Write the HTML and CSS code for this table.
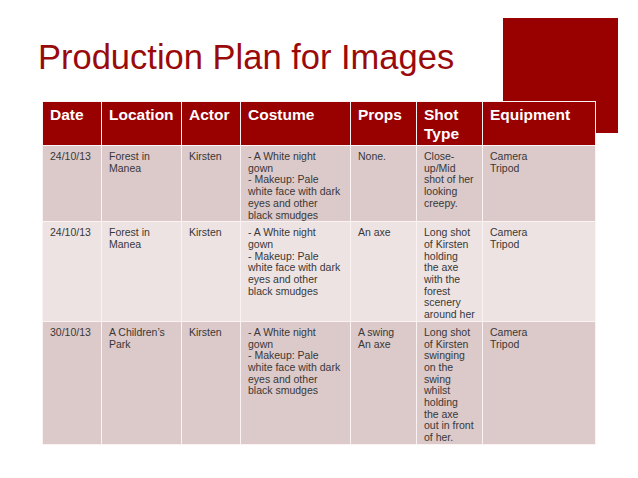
FILE: index.html
```html
<!DOCTYPE html>
<html>
<head>
<meta charset="utf-8">
<link rel="stylesheet" href="styles.css">
</head>
<body>
<div class="slide">
  <div class="accent"></div>
  <h1 class="title">Production Plan for Images</h1>
  <table class="plan">
    <colgroup>
      <col class="c-date"><col class="c-loc"><col class="c-actor"><col class="c-cost"><col class="c-props"><col class="c-shot"><col class="c-eq">
    </colgroup>
    <thead>
      <tr>
        <th>Date</th><th>Location</th><th>Actor</th><th>Costume</th><th>Props</th><th>Shot<br>Type</th><th>Equipment</th>
      </tr>
    </thead>
    <tbody>
      <tr class="odd">
        <td>24/10/13</td>
        <td>Forest in<br>Manea</td>
        <td>Kirsten</td>
        <td>- A White night<br>gown<br>- Makeup: Pale<br>white face with dark<br>eyes and other<br>black smudges</td>
        <td>None.</td>
        <td>Close-<br>up/Mid<br>shot of her<br>looking<br>creepy.</td>
        <td>Camera<br>Tripod</td>
      </tr>
      <tr class="even">
        <td>24/10/13</td>
        <td>Forest in<br>Manea</td>
        <td>Kirsten</td>
        <td>- A White night<br>gown<br>- Makeup: Pale<br>white face with dark<br>eyes and other<br>black smudges</td>
        <td>An axe</td>
        <td>Long shot<br>of Kirsten<br>holding<br>the axe<br>with the<br>forest<br>scenery<br>around her</td>
        <td>Camera<br>Tripod</td>
      </tr>
      <tr class="odd">
        <td>30/10/13</td>
        <td>A Children’s<br>Park</td>
        <td>Kirsten</td>
        <td>- A White night<br>gown<br>- Makeup: Pale<br>white face with dark<br>eyes and other<br>black smudges</td>
        <td>A swing<br>An axe</td>
        <td>Long shot<br>of Kirsten<br>swinging<br>on the<br>swing<br>whilst<br>holding<br>the axe<br>out in front<br>of her.</td>
        <td>Camera<br>Tripod</td>
      </tr>
    </tbody>
  </table>
</div>
</body>
</html>
```
FILE: styles.css
```css
html, body {
  margin: 0;
  padding: 0;
  background: #ffffff;
}
.slide {
  position: relative;
  width: 638px;
  height: 478px;
  overflow: hidden;
  font-family: "Liberation Sans", Arial, sans-serif;
}
.accent {
  position: absolute;
  left: 503px;
  top: 18px;
  width: 115px;
  height: 115px;
  background: #990000;
  z-index: 0;
}
.title {
  position: relative;
  z-index: 1;
  margin: 0;
  padding: 37px 0 0 38px;
  font-size: 34.5px;
  line-height: 40px;
  font-weight: normal;
  color: #9a0a0a;
  white-space: nowrap;
}
.plan {
  position: relative;
  z-index: 1;
  margin: 24px 0 0 42px;
  width: 553px;
  table-layout: fixed;
  border-collapse: collapse;
}
.c-date { width: 59px; }
.c-loc { width: 80px; }
.c-actor { width: 59px; }
.c-cost { width: 110px; }
.c-props { width: 66px; }
.c-shot { width: 66px; }
.c-eq { width: 113px; }
.plan th,
.plan td {
  border: 1px solid #fbf3f3;
  text-align: left;
  vertical-align: top;
  white-space: nowrap;
  overflow: hidden;
}
.plan th {
  background: #990000;
  color: #ffffff;
  font-weight: bold;
  font-size: 15.5px;
  line-height: 19px;
  padding: 3px 7px 2px;
}
.plan td {
  color: #383838;
  font-size: 10.5px;
  line-height: 11.7px;
  padding: 5px 7px 0;
}
.plan tr.odd td { background: #dcc9c9; }
.plan tr.even td { background: #ede3e3; }
```
